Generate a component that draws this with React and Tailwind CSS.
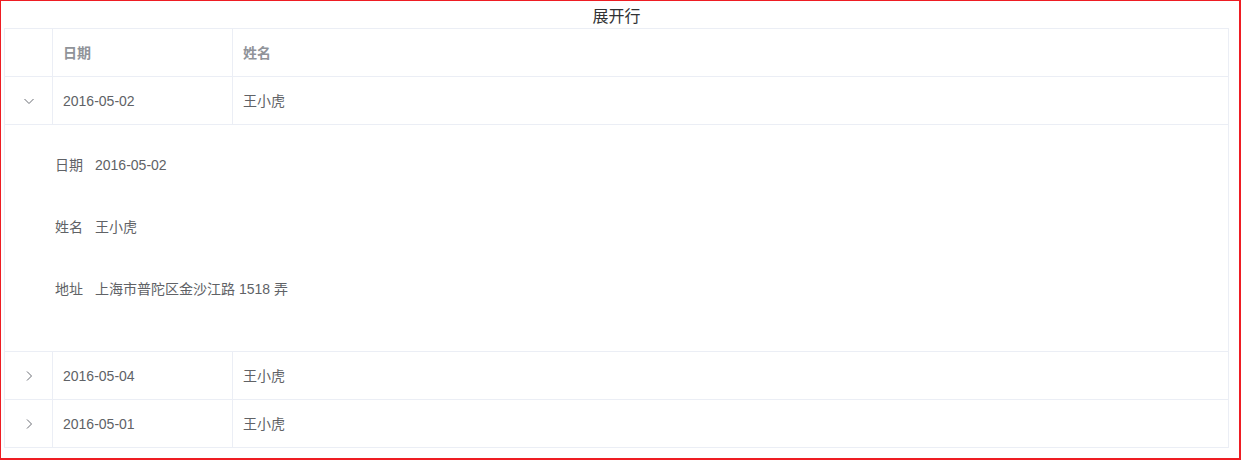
import React from "react";

const rows = [
  { date: "2016-05-02", name: "王小虎", address: "上海市普陀区金沙江路 1518 弄", open: true },
  { date: "2016-05-04", name: "王小虎", address: "上海市普陀区金沙江路 1517 弄", open: false },
  { date: "2016-05-01", name: "王小虎", address: "上海市普陀区金沙江路 1519 弄", open: false },
];

const Chevron = ({ open }) => (
  <svg
    width="12"
    height="12"
    viewBox="0 0 12 12"
    className={open ? "rotate-90" : ""}
    fill="none"
    stroke="#6b6e75"
    strokeWidth="1"
  >
    <path d="M4 1.5 L8.5 6 L4 10.5" />
  </svg>
);

const Item = ({ label, value }) => (
  <div className="flex h-10 items-center">
    <span className="w-10 text-[#606266]">{label}</span>
    <span className="text-[#606266]">{value}</span>
  </div>
);

export default function App() {
  return (
    <div
      className="w-[1241px] h-[460px] border-t border-l border-r-2 border-b-2 border-[#ee1d23] bg-white pl-[3px] text-sm"
      style={{ fontFamily: '"Liberation Sans", "Noto Sans CJK SC", sans-serif' }}
    >
      <div className="w-[1225px]">
        <div className="h-[27px] pt-[5px] flex items-center justify-center text-base text-[#303133]">展开行</div>
        <div className="border-t border-l border-r border-[#ebeef5]">
          <div className="grid grid-cols-[48px_180px_1fr] h-12 border-b border-[#ebeef5] font-bold text-[#909399]">
            <div className="border-r border-[#ebeef5]"></div>
            <div className="border-r border-[#ebeef5] flex items-center pl-2.5">日期</div>
            <div className="flex items-center pl-2.5">姓名</div>
          </div>
          {rows.map((r) => (
            <div key={r.date}>
              <div className="grid grid-cols-[48px_180px_1fr] h-12 border-b border-[#ebeef5] text-[#606266]">
                <div className="border-r border-[#ebeef5] flex items-center justify-center">
                  <Chevron open={r.open} />
                </div>
                <div className="border-r border-[#ebeef5] flex items-center pl-2.5">{r.date}</div>
                <div className="flex items-center pl-2.5">{r.name}</div>
              </div>
              {r.open && (
                <div className="border-b border-[#ebeef5] px-[50px] py-5 flex flex-col gap-[22px] pb-[42px]">
                  <Item label="日期" value={r.date} />
                  <Item label="姓名" value={r.name} />
                  <Item label="地址" value={r.address} />
                </div>
              )}
            </div>
          ))}
        </div>
      </div>
    </div>
  );
}
